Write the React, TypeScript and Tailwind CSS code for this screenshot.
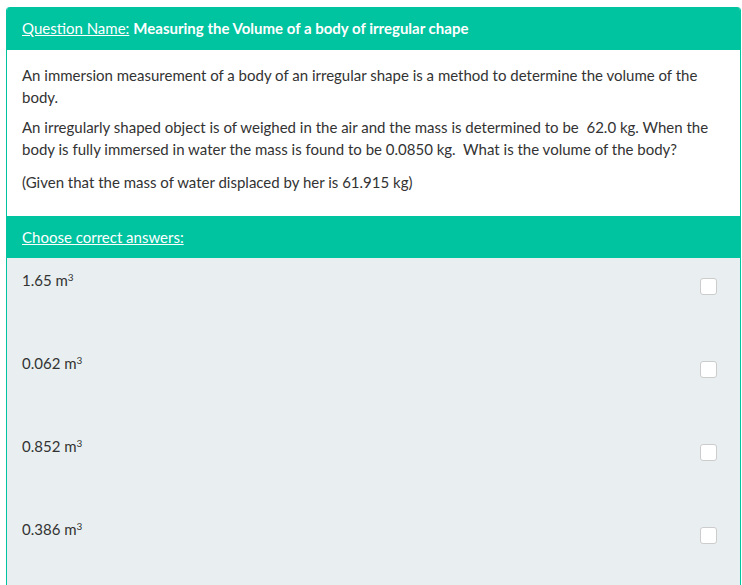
export default function App() {
  const answers = ["1.65", "0.062", "0.852", "0.386"];

  return (
    <div className="min-h-screen bg-white pt-[7px] pl-[6px] pr-[1px] font-['Lato','Noto_Sans',sans-serif] text-[15px] text-[#333]">
      <div className="rounded-t-[4px] border-x border-[#00c39f] overflow-hidden">
        {/* question header */}
        <div className="bg-[#00c39f] h-[43px] flex items-center px-[15px] text-white">
          <span className="underline">Question Name:</span>
          <span className="ml-[4px] font-bold">Measuring the Volume of a body of irregular chape</span>
        </div>

        {/* question body */}
        <div className="bg-white px-[15px] pt-[14px] pb-[23px] leading-[22px]">
          <p className="mb-[8px]">
            An immersion measurement of a body of an irregular shape is a method to determine the volume of the body.
          </p>
          <p className="mb-[11px]">
            An irregularly shaped object is of weighed in the air and the mass is determined to be&nbsp; 62.0 kg. When the body is fully immersed in water the mass is found to be 0.0850 kg.&nbsp; What is the volume of the body?
          </p>
          <p>(Given that the mass of water displaced by her is 61.915 kg)</p>
        </div>

        {/* answers header */}
        <div className="bg-[#00c39f] h-[42px] flex items-center px-[15px] text-white">
          <span className="underline">Choose correct answers:</span>
        </div>

        {/* answers */}
        <div className="bg-[#e9eff0]">
          {answers.map((a) => (
            <div key={a} className="h-[83px] flex items-start justify-between pl-[15px] pr-[23px] pt-[12px]">
              <span className="leading-[20px]">
                {a} m<sup className="text-[10px]">3</sup>
              </span>
              <span className="mt-[8px] w-[17px] h-[17px] rounded-[3px] border border-[#cccccc] bg-white" />
            </div>
          ))}
        </div>
      </div>
    </div>
  );
}
